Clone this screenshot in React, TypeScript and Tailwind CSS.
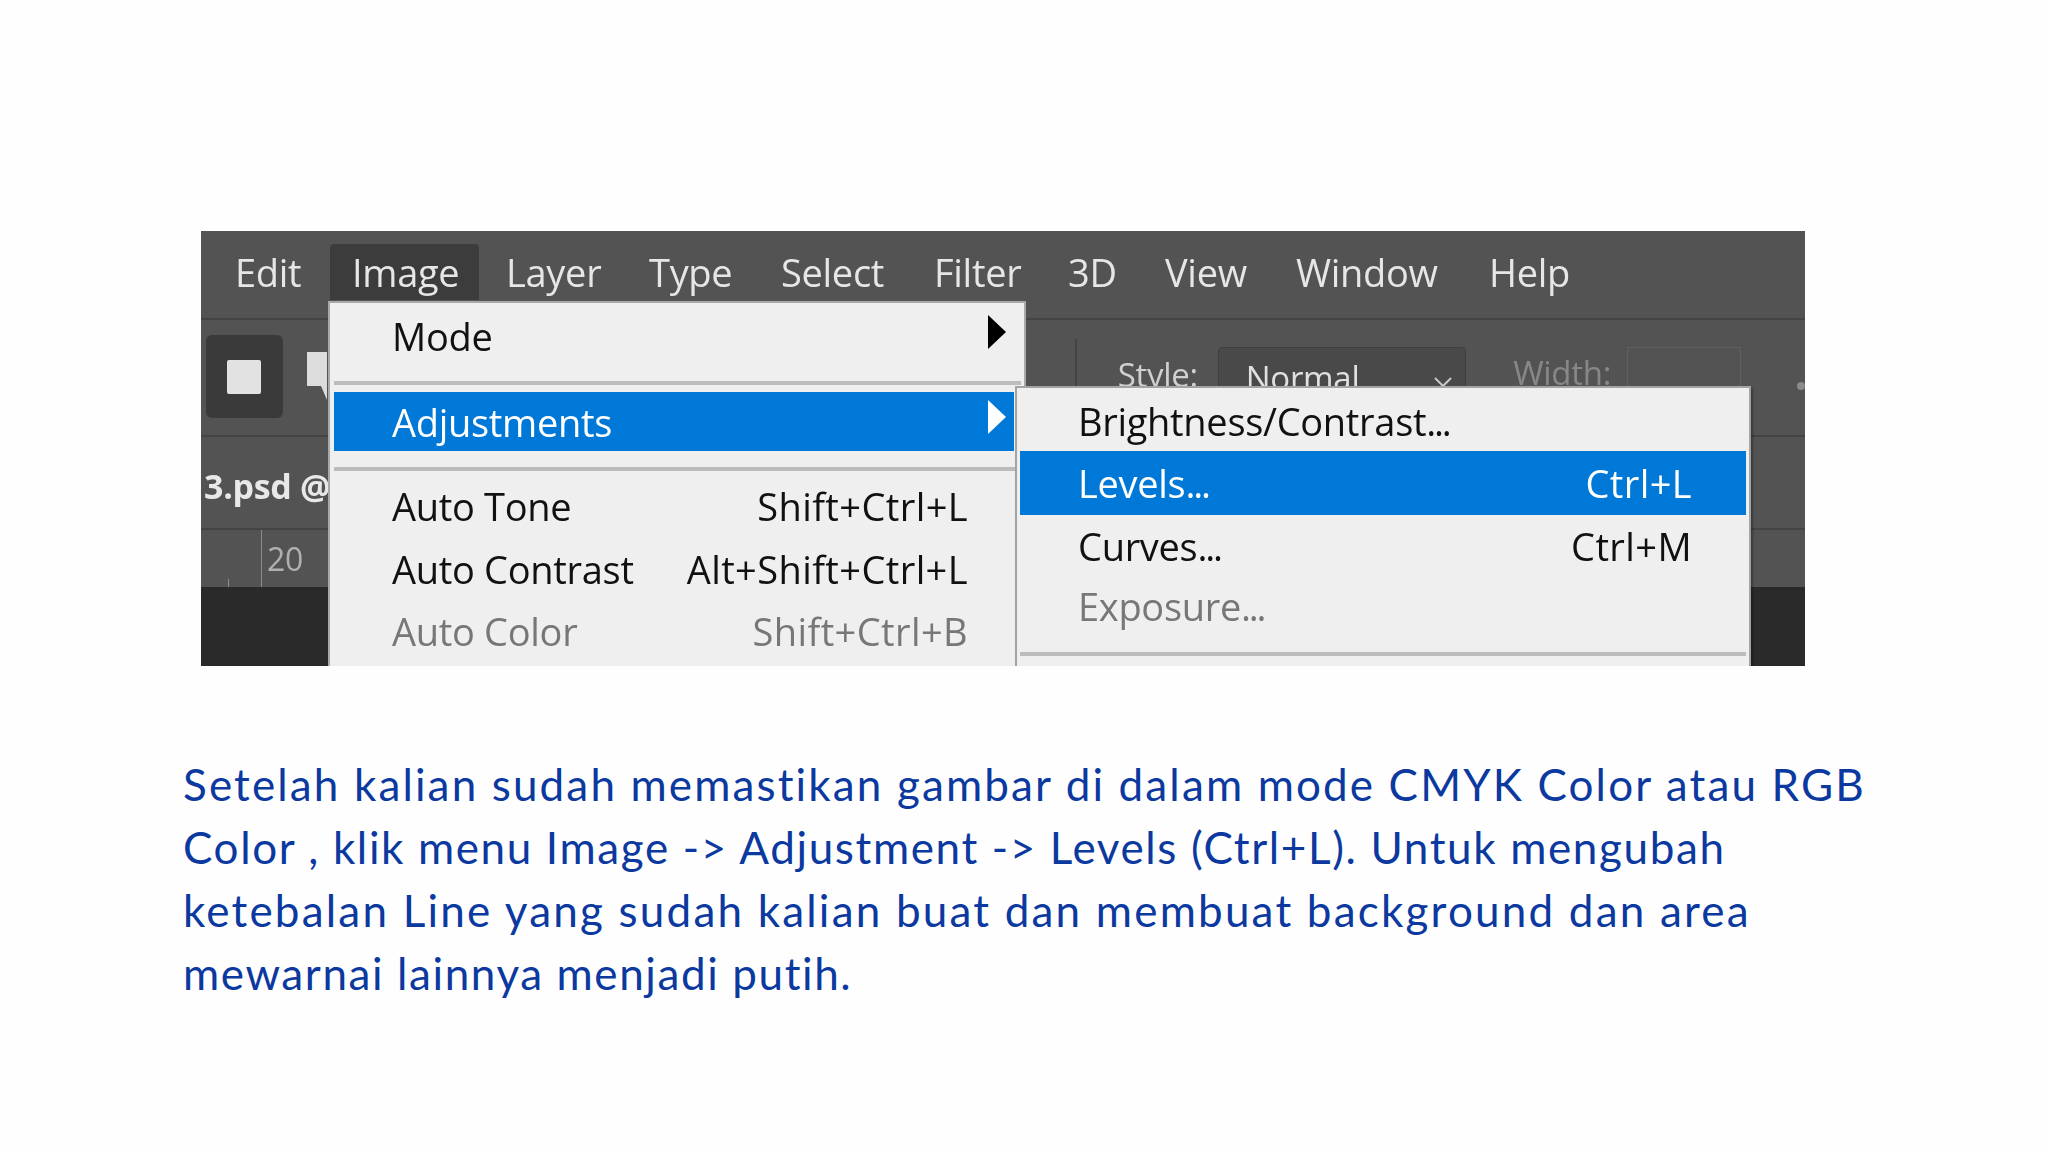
const menuBarItems = [
  { label: 'Layer', width: 'w-[143px]' },
  { label: 'Type', width: 'w-[132px]' },
  { label: 'Select', width: 'w-[153px]' },
  { label: 'Filter', width: 'w-[134px]' },
  { label: '3D', width: 'w-[97px]' },
  { label: 'View', width: 'w-[131px]' },
  { label: 'Window', width: 'w-[193px]' },
  { label: 'Help', width: 'w-[90px]' },
];

function Separator() {
  return <div className="h-[4px] bg-[#bcbcbc]" />;
}

function Dots() {
  return <span className="tracking-[-2.2px]">...</span>;
}

function Arrow({ color, className }: { color: string; className: string }) {
  return (
    <svg width="18" height="34" viewBox="0 0 18 34" className={className}>
      <path d="M0 0 L18 17 L0 34 Z" fill={color} />
    </svg>
  );
}

function MenuRow({ label, keys, dim }: { label: string; keys: string; dim?: boolean }) {
  return (
    <div className={`flex h-[62.5px] items-center justify-between pl-[58px] pr-[53px] ${dim ? 'text-[#77777a]' : 'text-[#111111]'}`}>
      <span>{label}</span>
      <span className="tracking-[0.4px]">{keys}</span>
    </div>
  );
}

function ImageMenu() {
  return (
    <div className="absolute left-[127px] top-[70px] h-[366px] w-[698px] border-2 border-b-0 border-[#a9a9a9] bg-[#efeff0] pl-[4px] pr-[3px]">
      <div className="flex h-[78px] items-center justify-between pb-[12px] pl-[58px] pr-[15px] text-[#111111]">
        <span>Mode</span>
        <Arrow color="#000000" className="-mt-[8px] shrink-0" />
      </div>
      <Separator />
      <div className="mr-[7px] mt-[7px] flex h-[59px] items-center justify-between bg-[#0078d7] pl-[58px] pr-[8px] text-white">
        <span>Adjustments</span>
        <Arrow color="#ffffff" className="-mt-[9px] shrink-0" />
      </div>
      <div className="mt-[16px]">
        <Separator />
      </div>
      <div className="mt-[4px]">
        <MenuRow label="Auto Tone" keys="Shift+Ctrl+L" />
        <MenuRow label="Auto Contrast" keys="Alt+Shift+Ctrl+L" />
        <MenuRow label="Auto Color" keys="Shift+Ctrl+B" dim />
      </div>
    </div>
  );
}

function AdjustmentsMenu() {
  return (
    <div className="absolute left-[814px] top-[155px] h-[281px] w-[736px] border-2 border-b-0 border-[#a3a3a3] bg-[#efeff0] px-[3px] pt-[3px] shadow-[2px_2px_2px_rgba(0,0,0,0.3)]">
      <div className="flex h-[60px] items-center pl-[58px] text-[#111111]">
        <span>
          Brightness/Contrast
          <Dots />
        </span>
      </div>
      <div className="flex h-[64px] items-center justify-between bg-[#0078d7] pl-[58px] pr-[54px] text-white">
        <span>
          Levels
          <Dots />
        </span>
        <span className="tracking-[0.4px]">Ctrl+L</span>
      </div>
      <div className="flex h-[62px] items-center justify-between pl-[58px] pr-[54px] text-[#111111]">
        <span>
          Curves
          <Dots />
        </span>
        <span className="tracking-[0.4px]">Ctrl+M</span>
      </div>
      <div className="flex h-[58px] items-center pl-[58px] text-[#77777a]">
        <span>
          Exposure
          <Dots />
        </span>
      </div>
      <div className="mt-[17px]">
        <Separator />
      </div>
    </div>
  );
}

function MenuBar() {
  return (
    <div className="flex h-[89px] items-center border-b-2 border-[#444444] pb-[5px] pl-[34px] text-[#e6e6e6]">
      <span className="w-[95px]">Edit</span>
      <span className="mr-[27px] flex h-[56px] w-[149px] items-center rounded-t-[4px] bg-[#3c3c3c] pl-[22px]">Image</span>
      {menuBarItems.map((item) => (
        <span key={item.label} className={item.width}>
          {item.label}
        </span>
      ))}
    </div>
  );
}

function OptionsBar() {
  return (
    <div className="flex h-[117px] items-start border-b-2 border-[#444444]">
      <div className="ml-[5px] mt-[15px] flex h-[83px] w-[78px] items-center justify-center rounded-[6px] bg-[#3a3a3a]">
        <div className="h-[34px] w-[34px] rounded-[2px] bg-[#e2e2e2]" />
      </div>
      <svg width="20" height="48" viewBox="0 0 20 48" className="ml-[24px] mt-[32px] shrink-0">
        <path d="M0 0 H20 V48 L14 34 H0 Z" fill="#dcdcdc" />
      </svg>
      <div className="ml-[748px] mt-[19px] h-[60px] w-[2px] bg-[#444444]" />
      <div className="ml-[41px] mt-[38px] text-[33px] text-[#d0d0d0]">Style:</div>
      <div className="relative ml-[20px] mt-[27px] h-[60px] w-[252px] rounded-[4px] border border-[#3e3e3e] bg-[#494949] pl-[27px] pt-[13px] text-[33px] text-[#e0e0e0]">
        Normal
        <svg width="20" height="12" viewBox="0 0 20 12" className="absolute right-[12px] top-[28px]">
          <path d="M2 2 L10 10 L18 2" fill="none" stroke="#c8c8c8" strokeWidth="2" />
        </svg>
      </div>
      <div className="ml-[47px] mt-[36px] text-[33px] text-[#878787]">Width:</div>
      <div className="ml-[16px] mt-[27px] h-[60px] w-[116px] border border-[#606060]" />
      <div className="ml-[56px] mt-[62px] h-[8px] w-[8px] rounded-full bg-[#8a8a8a]" />
    </div>
  );
}

function Ruler() {
  return (
    <div className="flex h-[57px] items-end bg-[#535353] pl-[27px]">
      <div className="mb-0 h-[8px] w-[1px] bg-[#8c8c8c]" />
      <div className="ml-[32px] flex h-full items-center border-l border-[#8c8c8c] pl-[5px] text-[32px] text-[#b0b0b0]">20</div>
      <div className="ml-[1412px] h-[8px] w-[1px] bg-[#8c8c8c]" />
      <div className="ml-[28px] h-[8px] w-[1px] bg-[#8c8c8c]" />
    </div>
  );
}

function PhotoshopShot() {
  return (
    <div className="relative h-[435px] w-[1604px] overflow-hidden bg-[#535353] font-['Open_Sans',sans-serif] text-[38px] leading-none tracking-[-0.3px] blur-[0.6px]">
      <MenuBar />
      <OptionsBar />
      <div className="flex h-[93px] items-center border-b-2 border-[#444444] pl-[3px] pt-[6px] text-[34px] font-bold text-[#e8e8e8]">
        3.psd @
      </div>
      <Ruler />
      <div className="h-[80px] bg-[#2b2a2b]" />
      <ImageMenu />
      <AdjustmentsMenu />
    </div>
  );
}

export default function App() {
  return (
    <div className="h-[1152px] w-full overflow-hidden bg-[#fefefe] pt-[231px]">
      <div className="pl-[201px]">
        <PhotoshopShot />
      </div>
      <div className="mt-[87px] pl-[183px] font-['Lato',sans-serif] text-[44px] leading-[63px] text-[#0b399f]">
        <p className="tracking-[2.14px]">Setelah kalian sudah memastikan gambar di dalam mode CMYK Color atau RGB</p>
        <p className="tracking-[1.63px]">Color , klik menu Image -&gt; Adjustment -&gt; Levels (Ctrl+L). Untuk mengubah</p>
        <p className="tracking-[2.2px]">ketebalan Line yang sudah kalian buat dan membuat background dan area</p>
        <p className="tracking-[1.6px]">mewarnai lainnya menjadi putih.</p>
      </div>
    </div>
  );
}
